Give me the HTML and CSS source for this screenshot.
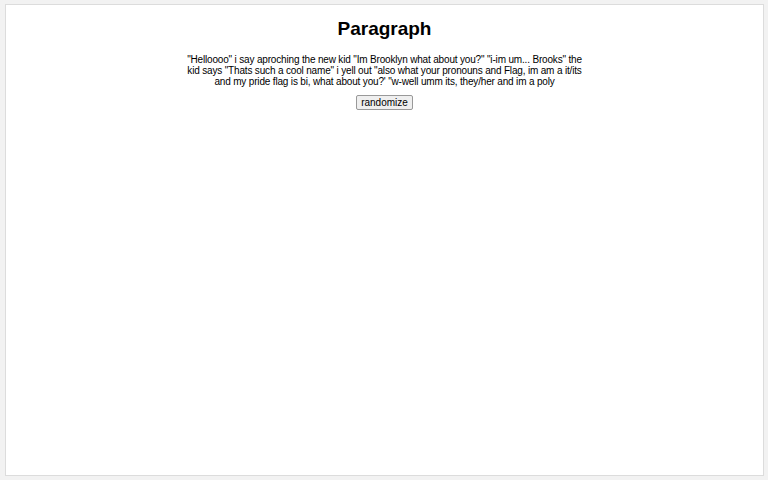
FILE: index.html
```html
<!DOCTYPE html>
<html lang="en">
  <head>
    <meta charset="UTF-8" />
    <title>Paragraph</title>
    <link rel="stylesheet" href="styles.css">
  </head>
  <body>
    <main class="card">
      <h1>Paragraph</h1>
      <p class="story" id="story">"Helloooo" i say aproching the new kid "Im Brooklyn what about you?" "i-im um... Brooks" the kid says "Thats such a cool name" i yell out "also what your pronouns and Flag, im am a it/its and my pride flag is bi, what about you?' "w-well umm its, they/her and im a poly</p>
      <button id="randomBtn" class="btn">randomize</button>
    </main>
  </body>
</html>
```
FILE: styles.css
```css
* {
  margin: 0;
  padding: 0;
  box-sizing: border-box;
}

body {
  font-family: "Liberation Sans", Arial, sans-serif;
  background: #f2f2f2;
  height: 100vh;
  padding: 4px 4px 4px 5px;
  color: #000;
}

.card {
  background: #fff;
  border: 1px solid #dcdcdc;
  height: 100%;
  display: flex;
  flex-direction: column;
  align-items: center;
  padding-top: 13px;
}

h1 {
  font-size: 19px;
  font-weight: 700;
  line-height: 22px;
}

.story {
  max-width: 400px;
  margin-top: 14px;
  font-size: 10px;
  line-height: 11px;
  letter-spacing: -0.17px;
  text-align: center;
}

.btn {
  margin-top: 8px;
  font-family: "Liberation Sans", Arial, sans-serif;
  font-size: 10px;
  padding: 1px 4px;
  background: #efefef;
  border: 1px solid #999;
  border-radius: 2px;
}
```
